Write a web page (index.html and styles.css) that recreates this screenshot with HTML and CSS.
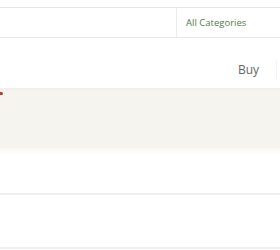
FILE: index.html
```html
<!DOCTYPE html>
<html lang="en">
<head>
<meta charset="UTF-8">
<meta name="viewport" content="width=device-width, initial-scale=1.0">
<title>Listings</title>
<link rel="stylesheet" href="styles.css">
</head>
<body>

<div class="page">
    <div class="search-bar">
        <div class="search-field"></div>
        <div class="category-select">All Categories</div>
    </div>

    <div class="tabs">
        <span class="tab">Buy</span>
        <span class="tab-edge"></span>
    </div>

    <div class="marker"></div>

    <div class="filter-panel"></div>

    <div class="row row-first"></div>
    <div class="row"></div>
</div>

</body>
</html>
```

FILE: styles.css
```css
body {
    margin: 0;
    padding: 0;
    background: #fff;
    font-family: "Open Sans", Arial, sans-serif;
}

.page {
    width: 280px;
    position: relative;
}

.search-bar {
    display: flex;
    height: 29px;
    margin-top: 7px;
    border-top: 1px solid #e6e6e6;
    border-bottom: 1px solid #e8e8e8;
}

.search-field {
    width: 176px;
    border-right: 1px solid #ececec;
}

.category-select {
    flex: 1;
    padding-left: 9px;
    font-size: 9.5px;
    line-height: 29px;
    color: #55794a;
}

.tabs {
    display: flex;
    justify-content: flex-end;
    align-items: center;
    height: 50px;
    border-bottom: 2px solid #f6eeec;
}

.tab {
    font-size: 12px;
    color: #666;
    margin-right: 17px;
    margin-top: 12px;
}

.tab-edge {
    width: 1px;
    height: 18px;
    margin-top: 12px;
    margin-right: 3px;
    background: #f4f4f4;
}

.marker {
    position: absolute;
    left: 0;
    top: 85px;
    width: 3px;
    height: 3px;
    background: #c9323a;
    border-radius: 0 2px 2px 0;
}

.filter-panel {
    height: 58px;
    background: #f5f4ef;
}

.row {
    height: 52px;
    border-bottom: 2px solid #eeeeee;
}

.row-first {
    height: 45px;
    background: linear-gradient(#fdf8f6, #fff 9px);
}
```
